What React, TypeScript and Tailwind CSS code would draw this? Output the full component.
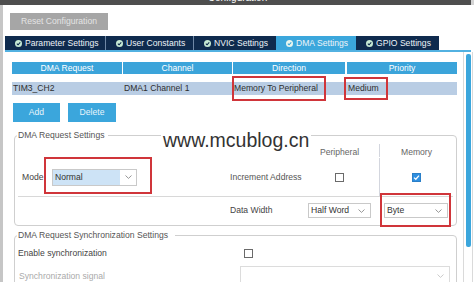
import React from "react";

const TabIcon = ({ active }: { active?: boolean }) => (
  <svg width="7" height="7" viewBox="0 0 8 8" className="shrink-0">
    <circle cx="4" cy="4" r="4" fill={active ? "#e8f6ee" : "#c6ead4"} />
    <path d="M2.1 4.1 L3.5 5.5 L6 2.8" stroke={active ? "#3ba7dc" : "#0f2b4e"} strokeWidth="1.2" fill="none" />
  </svg>
);

const Chevron = ({ color = "#8a8a8a" }: { color?: string }) => (
  <svg width="7" height="4" viewBox="0 0 7 4" className="shrink-0">
    <path d="M0.5 0.5 L3.5 3.4 L6.5 0.5" stroke={color} fill="none" strokeWidth="0.9" />
  </svg>
);

const Box = ({ checked }: { checked?: boolean }) =>
  checked ? (
    <div className="w-[9px] h-[9px] bg-[#2f8fe0] border border-[#2a7fc8] flex items-center justify-center">
      <svg width="7" height="7" viewBox="0 0 7 7">
        <path d="M1 3.6 L2.8 5.3 L6 1.6" stroke="white" strokeWidth="1.3" fill="none" />
      </svg>
    </div>
  ) : (
    <div className="w-[9px] h-[9px] bg-white border border-[#6a6a6a]" />
  );

const tabs = [
  { label: "Parameter Settings", w: "w-[101px]", sep: true },
  { label: "User Constants", w: "w-[88px]", sep: true },
  { label: "NVIC Settings", w: "w-[82px]", sep: false },
  { label: "DMA Settings", w: "w-[80px]", sep: false, active: true },
  { label: "GPIO Settings", w: "w-[83px]", sep: false },
];

export default function App() {
  return (
    <div className="relative w-[474px] h-[282px] overflow-hidden bg-white font-['Liberation_Sans',Arial,sans-serif] text-[8.6px] leading-none text-[#3b3b3b]">
      {/* top bar */}
      <div className="flex h-[5px]">
        <div className="w-[471px] h-[5px] bg-[#4e4e4e] overflow-hidden flex justify-center">
          <span className="text-white text-[10px] leading-[10px] -mt-[7px] pl-[4px]">Configuration</span>
        </div>
        <div className="flex-1 bg-[#d4d4d4]" />
      </div>
      <div className="flex h-[277px]">
        <div className="w-[3px] bg-[#c6c6c6]" />
        <div className="flex-1 flex flex-col">
          {/* reset */}
          <div className="shrink-0 mt-[8px] ml-[7px] w-[98px] h-[17px] bg-[#a6a6a6] text-[#e4e4e4] flex items-center justify-center">
            Reset Configuration
          </div>
          {/* tabs */}
          <div className="shrink-0 mt-[6px] ml-[2px] flex h-[14px]">
            {tabs.map((t) => (
              <div
                key={t.label}
                className={`${t.w} h-[14px] flex items-center gap-[3px] pl-[10px] text-[#eef3f8] ${
                  t.active ? "bg-[#3ba7dc]" : "bg-[#0f2b4e]"
                } ${t.sep ? "border-r border-[#6f88a6]" : ""}`}
              >
                <TabIcon active={t.active} />
                <span>{t.label}</span>
              </div>
            ))}
          </div>
          <div className="shrink-0 ml-[2px] h-[2px] w-[466px] bg-[#52b1e1]" />
          <div className="flex flex-1 min-h-0">
            {/* content */}
            <div className="w-[460px] flex flex-col">
              {/* table header */}
              <div className="shrink-0 mt-[10px] ml-[9px] flex h-[12px] text-white">
                <div className="w-[110px] bg-[#3ba4da] flex items-center justify-center">DMA Request</div>
                <div className="ml-[1px] w-[109px] bg-[#3ba4da] flex items-center justify-center">Channel</div>
                <div className="ml-[1px] w-[112px] bg-[#3ba4da] flex items-center justify-center">Direction</div>
                <div className="ml-[2px] w-[110px] bg-[#3ba4da] flex items-center justify-center">Priority</div>
              </div>
              {/* row */}
              <div className="shrink-0 mt-[8px] ml-[9px] w-[445px] h-[13px] bg-[#b9cde4] flex items-center text-[#2e2e2e]">
                <div className="w-[111px] pl-[1px]">TIM3_CH2</div>
                <div className="w-[110px] pl-[1px]">DMA1 Channel 1</div>
                <div className="w-[114px] pl-[1px]">Memory To Peripheral</div>
                <div className="pl-[1px]">Medium</div>
              </div>
              {/* buttons */}
              <div className="shrink-0 mt-[8px] ml-[10px] flex h-[19px] text-[#e8f4fb]">
                <div className="w-[47px] bg-[#3ba6dc] flex items-center justify-center">Add</div>
                <div className="ml-[8px] w-[48px] bg-[#3ba6dc] flex items-center justify-center">Delete</div>
              </div>
              {/* fieldset 1 */}
              <fieldset className="shrink-0 mt-[8px] ml-[11px] w-[443px] h-[96px] border border-[#cfcfcf] rounded-[4px]">
                <legend className="ml-[2px] pl-[1px] pr-[4px] leading-[10px] text-[#555]">DMA Request Settings</legend>
                <div className="mx-[3px] flex h-[18px] items-end pb-[1px] text-[#666]">
                  <div className="w-[208px]" />
                  <div className="w-[74px]" />
                  <div className="w-[79px] flex justify-center leading-[10px]">Peripheral</div>
                  <div className="flex-1 h-[13px] border-l border-[#d3d6de] flex items-end justify-center leading-[10px]">Memory</div>
                </div>
                <div className="mx-[3px] flex h-[39px] items-center border-b border-[#d8d8d8]">
                  <div className="w-[208px] flex items-center pl-[4px] h-full">
                    <span className="w-[30px] text-[#444]">Mode</span>
                    <div className="w-[85px] h-[17px] border border-[#c9c9c9] flex">
                      <div className="w-[67px] bg-[#cde3f6] flex items-center pl-[2px] text-[#333]">Normal</div>
                      <div className="flex-1 flex items-center justify-center">
                        <Chevron />
                      </div>
                    </div>
                  </div>
                  <div className="w-[74px] pl-[4px] whitespace-nowrap text-[#555]">Increment Address</div>
                  <div className="w-[79px] flex justify-center">
                    <Box />
                  </div>
                  <div className="flex-1 h-full border-l border-[#d3d6de] flex items-center justify-center">
                    <Box checked />
                  </div>
                </div>
                <div className="mx-[3px] flex h-[27px] items-center">
                  <div className="w-[208px]" />
                  <div className="w-[74px] pl-[4px] text-[#444]">Data Width</div>
                  <div className="w-[79px] flex justify-center">
                    <div className="w-[63px] h-[15px] border border-[#c9c9c9] flex items-center justify-between pl-[2px] pr-[5px] text-[#333]">
                      <span>Half Word</span>
                      <Chevron />
                    </div>
                  </div>
                  <div className="flex-1 flex justify-center">
                    <div className="w-[64px] h-[15px] border border-[#c9c9c9] flex items-center justify-between pl-[2px] pr-[5px] text-[#333]">
                      <span>Byte</span>
                      <Chevron />
                    </div>
                  </div>
                </div>
              </fieldset>
              {/* fieldset 2 */}
              <fieldset className="shrink-0 mt-[4px] ml-[11px] w-[443px] h-[70px] border border-[#cfcfcf] rounded-[4px]">
                <legend className="ml-[2px] pl-[1px] pr-[7px] leading-[10px] text-[#555]">DMA Request Synchronization Settings</legend>
                <div className="mt-[3px] flex h-[20px] items-center">
                  <div className="w-[229px] pl-[3px] text-[#444]">Enable synchronization</div>
                  <Box />
                </div>
                <div className="mt-[3px] flex h-[20px] items-center">
                  <div className="w-[225px] pl-[4px] text-[#aaaaaa]">Synchronization signal</div>
                  <div className="w-[210px] h-[20px] border border-[#dcdcdc] flex items-center justify-end pr-[5px]">
                    <Chevron color="#c4c4c4" />
                  </div>
                </div>
              </fieldset>
            </div>
            {/* scrollbar */}
            <div className="w-[10px] border-l border-r border-[#dadada] flex justify-center">
              <div className="mt-[2px] w-[5px] h-[193px] bg-[#3ba6dc] rounded-[2px]" />
            </div>
          </div>
        </div>
      </div>

      {/* watermark */}
      <div className="absolute left-[161px] top-[130px] px-[2px] bg-white text-[19.5px] leading-[20px] text-[#333] font-['Liberation_Sans',Arial,sans-serif]">
        www.mcublog.cn
      </div>

      {/* red annotation boxes */}
      <div className="absolute left-[232px] top-[76px] w-[94px] h-[25px] border-2 border-[#d0353a]" />
      <div className="absolute left-[344px] top-[77px] w-[44px] h-[23px] border-2 border-[#d0353a]" />
      <div className="absolute left-[44px] top-[157px] w-[108px] h-[37px] border-2 border-[#d0353a]" />
      <div className="absolute left-[380px] top-[193px] w-[71px] h-[34px] border-2 border-[#d0353a]" />
    </div>
  );
}
